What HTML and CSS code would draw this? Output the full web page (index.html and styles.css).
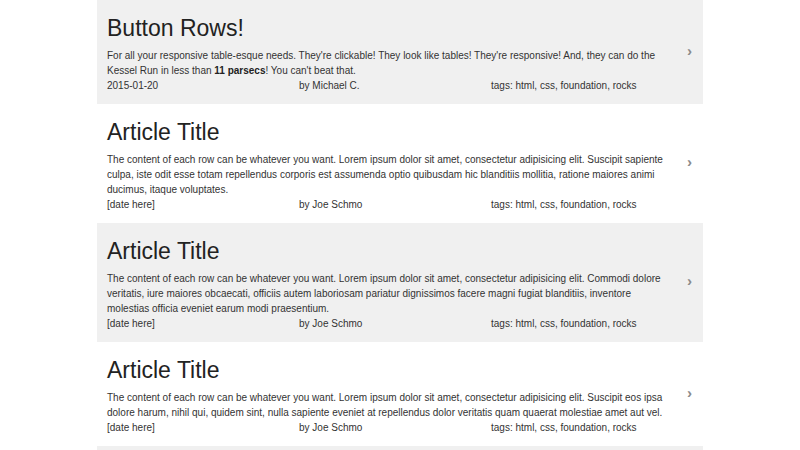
FILE: index.html
```html
<!DOCTYPE html>
<html>
<head>
<meta charset="utf-8">
<link rel="stylesheet" href="styles.css">
</head>
<body>
<div class="list">
  <a class="row">
    <div class="content">
      <h1 class="title">Button Rows!</h1>
      <p class="text">For all your responsive table-esque needs. They're clickable! They look like tables! They're responsive! And, they can do the Kessel Run in less than <b>11 parsecs</b>! You can't beat that.</p>
      <div class="meta"><span>2015-01-20</span><span>by Michael C.</span><span>tags: html, css, foundation, rocks</span></div>
    </div>
    <div class="chev">›</div>
  </a>
  <a class="row">
    <div class="content">
      <h1 class="title">Article Title</h1>
      <p class="text">The content of each row can be whatever you want. Lorem ipsum dolor sit amet, consectetur adipisicing elit. Suscipit sapiente culpa, iste odit esse totam repellendus corporis est assumenda optio quibusdam hic blanditiis mollitia, ratione maiores animi ducimus, itaque voluptates.</p>
      <div class="meta"><span>[date here]</span><span>by Joe Schmo</span><span>tags: html, css, foundation, rocks</span></div>
    </div>
    <div class="chev">›</div>
  </a>
  <a class="row">
    <div class="content">
      <h1 class="title">Article Title</h1>
      <p class="text">The content of each row can be whatever you want. Lorem ipsum dolor sit amet, consectetur adipisicing elit. Commodi dolore veritatis, iure maiores obcaecati, officiis autem laboriosam pariatur dignissimos facere magni fugiat blanditiis, inventore molestias officia eveniet earum modi praesentium.</p>
      <div class="meta"><span>[date here]</span><span>by Joe Schmo</span><span>tags: html, css, foundation, rocks</span></div>
    </div>
    <div class="chev">›</div>
  </a>
  <a class="row">
    <div class="content">
      <h1 class="title">Article Title</h1>
      <p class="text">The content of each row can be whatever you want. Lorem ipsum dolor sit amet, consectetur adipisicing elit. Suscipit eos ipsa dolore harum, nihil qui, quidem sint, nulla sapiente eveniet at repellendus dolor veritatis quam quaerat molestiae amet aut vel.</p>
      <div class="meta"><span>[date here]</span><span>by Joe Schmo</span><span>tags: html, css, foundation, rocks</span></div>
    </div>
    <div class="chev">›</div>
  </a>
  <a class="row">
    <div class="content">
      <h1 class="title">Article Title</h1>
      <p class="text">The content of each row can be whatever you want.</p>
      <div class="meta"><span>[date here]</span><span>by Joe Schmo</span><span>tags: html, css, foundation, rocks</span></div>
    </div>
    <div class="chev">›</div>
  </a>
</div>
</body>
</html>
```
FILE: styles.css
```css
html, body {
  margin: 0;
  padding: 0;
  background: #ffffff;
}
body {
  font-family: "Liberation Sans", Arial, sans-serif;
  color: #333333;
}
.list {
  width: 606px;
  margin: 0 auto;
}
.row {
  display: flex;
  align-items: center;
  padding: 15px 0 11px 10px;
  background: #f0f0f0;
  color: inherit;
  text-decoration: none;
}
.row:nth-child(even) {
  background: #ffffff;
}
.content {
  width: 576px;
}
.title {
  margin: 0 0 6px;
  font-size: 23px;
  line-height: 27px;
  font-weight: normal;
  color: #222222;
}
.text {
  margin: 0;
  padding-right: 12px;
  font-size: 10px;
  line-height: 15px;
}
.text b {
  font-weight: bold;
  color: #222;
}
.meta {
  display: grid;
  grid-template-columns: repeat(3, 1fr);
  font-size: 10px;
  line-height: 15px;
}
.chev {
  flex: 1;
  padding-left: 4px;
  padding-bottom: 8px;
  font-size: 15px;
  font-weight: bold;
  color: #8a8a8a;
}
```
